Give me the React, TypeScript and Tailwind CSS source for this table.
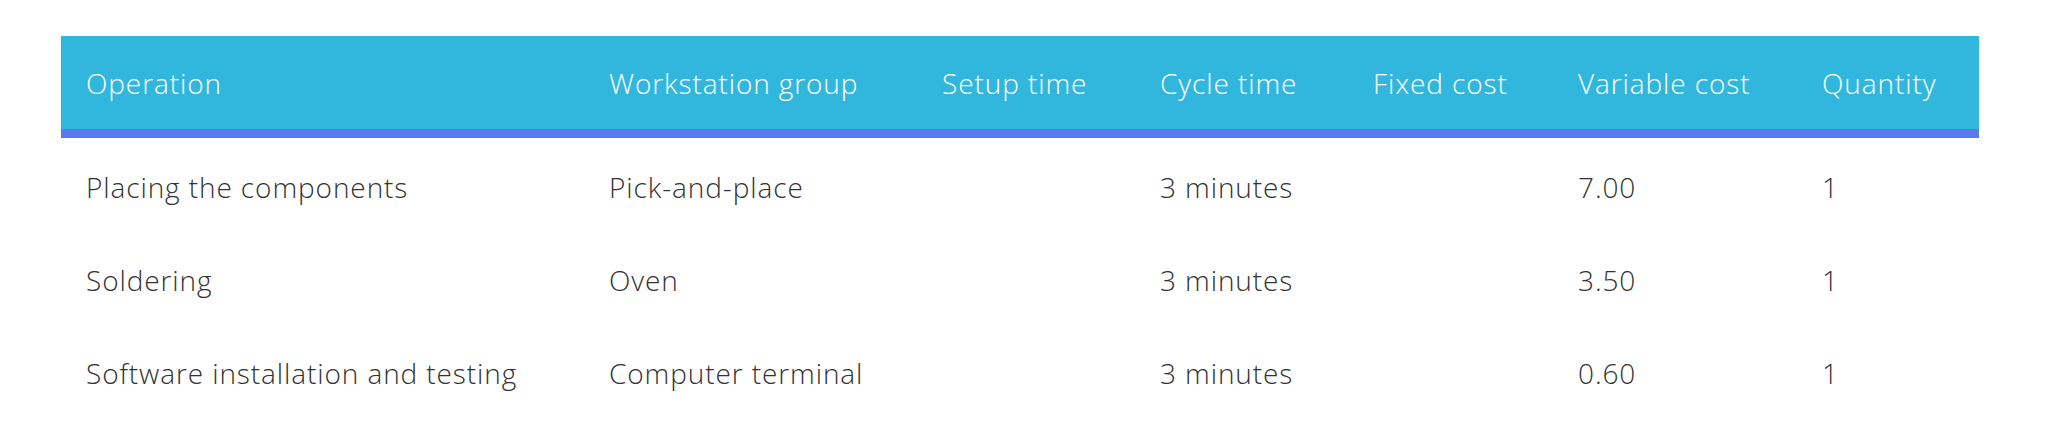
import React from 'react';

type Row = {
  operation: string;
  group: string;
  setup: string;
  cycle: string;
  fixed: string;
  variable: string;
  quantity: string;
};

const headers = [
  'Operation',
  'Workstation group',
  'Setup time',
  'Cycle time',
  'Fixed cost',
  'Variable cost',
  'Quantity',
];

const rows: Row[] = [
  { operation: 'Placing the components', group: 'Pick-and-place', setup: '', cycle: '3 minutes', fixed: '', variable: '7.00', quantity: '1' },
  { operation: 'Soldering', group: 'Oven', setup: '', cycle: '3 minutes', fixed: '', variable: '3.50', quantity: '1' },
  { operation: 'Software installation and testing', group: 'Computer terminal', setup: '', cycle: '3 minutes', fixed: '', variable: '0.60', quantity: '1' },
];

const cols = 'grid grid-cols-[548px_333px_218px_213px_205px_244px_157px]';

const App: React.FC = () => {
  return (
    <div
      className="w-[2048px] h-[424px] bg-white pt-[36px] pl-[61px]"
      style={{ fontFamily: '"Open Sans", Lato, sans-serif' }}
    >
      <div className="w-[1918px]">
        <div className={`${cols} h-[102px] bg-[#31b7de] border-b-[9px] border-[#5b78f0] items-center text-white text-[28px] font-[350] tracking-[0.9px]`}>
          {headers.map((h, i) => (
            <div key={h} className={i === 0 ? 'pl-[25px]' : ''}>
              {h}
            </div>
          ))}
        </div>
        {rows.map((r) => (
          <div key={r.operation} className={`${cols} h-[93px] pt-[4px] items-center text-[#333333] text-[28px] font-[350] tracking-[0.9px]`}>
            <div className="pl-[25px]">{r.operation}</div>
            <div>{r.group}</div>
            <div>{r.setup}</div>
            <div>{r.cycle}</div>
            <div>{r.fixed}</div>
            <div>{r.variable}</div>
            <div>{r.quantity}</div>
          </div>
        ))}
      </div>
    </div>
  );
};

export default App;
